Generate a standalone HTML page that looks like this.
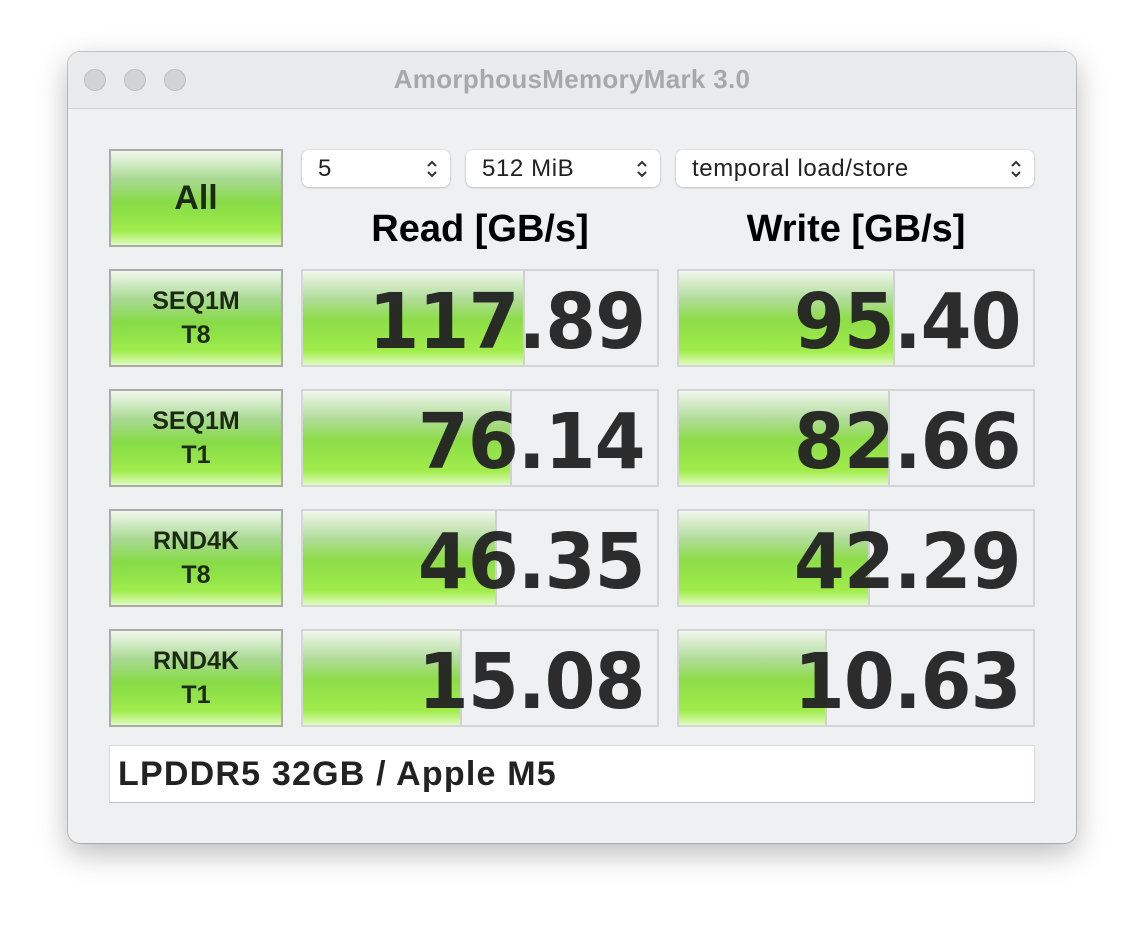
<!DOCTYPE html>
<html><head><meta charset="utf-8"><style>
body{margin:0;width:1144px;height:928px;background:#fff;position:relative;font-family:"Liberation Sans",sans-serif;overflow:hidden}
.win{position:absolute;left:68px;top:52px;width:1008px;height:791px;border-radius:12px;background:#eff0f2;box-shadow:0 10px 30px rgba(0,0,0,.28),0 0 0 1px rgba(0,0,0,.18);overflow:hidden}
.tb{position:absolute;left:0;top:0;width:100%;height:56px;background:#e9eaec;border-bottom:1px solid #cfcfd1}
.dot{position:absolute;top:17px;width:22px;height:22px;border-radius:50%;background:#d3d3d5;border:1px solid #bdbdc0;box-sizing:border-box}
.title{position:absolute;left:0;right:0;top:12px;text-align:center;font-weight:bold;font-size:26px;letter-spacing:.3px;color:#a8a8aa}
.a{position:absolute}
.btn{position:absolute;left:41px;width:174px;height:98px;box-sizing:border-box;border:2px solid #a9a9a9;background:linear-gradient(#f2f9ee 0%,#a9d993 30%,#86db45 55%,#a0ec4c 85%,#e0fcc0 100%);text-align:center;font-weight:bold;color:#1c2a14;font-size:25px;line-height:34px;display:flex;align-items:center;justify-content:center}
.cell{position:absolute;width:358px;height:98px;box-sizing:border-box;border:2px solid #d4d5d7;background:#eff0f2;overflow:hidden}
.bar{position:absolute;left:0;top:0;bottom:0;background:linear-gradient(#f2f8ee 0%,#b0dc98 30%,#8ddd48 52%,#a2ed4c 85%,#e0fcc0 100%);border-right:2px solid #cfd0d2}
.num{position:absolute;right:12px;top:2px;font-family:"DejaVu Sans",sans-serif;font-weight:bold;font-size:77px;line-height:100px;color:#222;transform:scaleX(.95);transform-origin:right;letter-spacing:-1px;opacity:.95}
.sel{position:absolute;top:98px;height:37px;box-sizing:border-box;background:#fff;border-radius:7px;box-shadow:0 0.5px 2px rgba(0,0,0,.3);font-size:24px;letter-spacing:.6px;line-height:37px;padding-left:16px;color:#222}
.sel svg{position:absolute;right:12px;top:9px}
.hd{position:absolute;top:156px;font-weight:bold;font-size:38px;color:#000;text-align:center;width:358px}
</style></head><body>
<div class="win">
<div class="tb"><div class="dot" style="left:16px"></div><div class="dot" style="left:56px"></div><div class="dot" style="left:96px"></div><div class="title">AmorphousMemoryMark 3.0</div></div>

<div class="btn" style="top:97px;font-size:34px">All</div>
<div class="btn" style="top:217px">SEQ1M<br>T8</div>
<div class="btn" style="top:337px">SEQ1M<br>T1</div>
<div class="btn" style="top:457px">RND4K<br>T8</div>
<div class="btn" style="top:577px">RND4K<br>T1</div>

<div class="sel" style="left:234px;width:148px">5<svg width="12" height="20" viewBox="0 0 12 20"><path d="M2 7l4-4 4 4M2 13l4 4 4-4" fill="none" stroke="#333" stroke-width="2"/></svg></div>
<div class="sel" style="left:398px;width:194px">512 MiB<svg width="12" height="20" viewBox="0 0 12 20"><path d="M2 7l4-4 4 4M2 13l4 4 4-4" fill="none" stroke="#333" stroke-width="2"/></svg></div>
<div class="sel" style="left:608px;width:358px">temporal load/store<svg width="12" height="20" viewBox="0 0 12 20"><path d="M2 7l4-4 4 4M2 13l4 4 4-4" fill="none" stroke="#333" stroke-width="2"/></svg></div>

<div class="hd" style="left:233px">Read [GB/s]</div>
<div class="hd" style="left:609px">Write [GB/s]</div>

<div class="cell" style="left:233px;top:217px"><div class="bar" style="width:220px"></div><div class="num">117.89</div></div>
<div class="cell" style="left:609px;top:217px"><div class="bar" style="width:214px"></div><div class="num">95.40</div></div>
<div class="cell" style="left:233px;top:337px"><div class="bar" style="width:207px"></div><div class="num">76.14</div></div>
<div class="cell" style="left:609px;top:337px"><div class="bar" style="width:209px"></div><div class="num">82.66</div></div>
<div class="cell" style="left:233px;top:457px"><div class="bar" style="width:192px"></div><div class="num">46.35</div></div>
<div class="cell" style="left:609px;top:457px"><div class="bar" style="width:189px"></div><div class="num">42.29</div></div>
<div class="cell" style="left:233px;top:577px"><div class="bar" style="width:157px"></div><div class="num">15.08</div></div>
<div class="cell" style="left:609px;top:577px"><div class="bar" style="width:146px"></div><div class="num">10.63</div></div>

<div class="a" style="left:41px;top:693px;width:926px;height:58px;background:#fff;border:1px solid #dcdcde;border-bottom-color:#c4c4c6;box-sizing:border-box;font-weight:bold;font-size:34px;letter-spacing:1.2px;line-height:56px;padding-left:8px;color:#222">LPDDR5 32GB / Apple M5</div>
</div>
</body></html>
